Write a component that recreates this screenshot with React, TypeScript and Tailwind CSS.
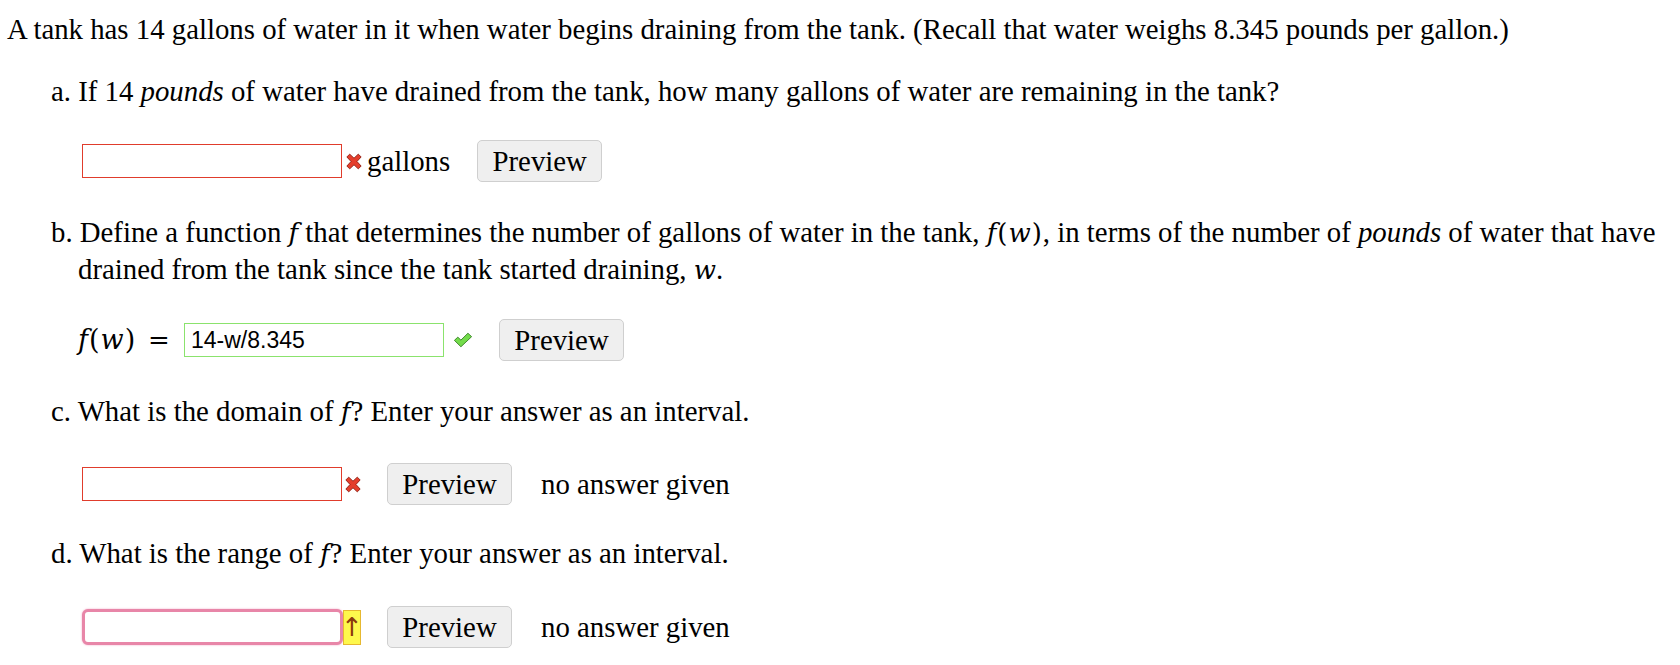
import React from "react";

const serif = { fontFamily: '"Liberation Serif", "Times New Roman", serif' };
const math = { fontFamily: '"DejaVu Serif", "Liberation Serif", serif' };

function XIcon() {
  return (
    <svg width="16" height="17" viewBox="0 0 14 15" className="block">
      <path d="M3.2 1 L7 4.6 L10.8 1 L13.3 3.5 L9.6 7.5 L13.3 11.5 L10.8 14 L7 10.4 L3.2 14 L0.7 11.5 L4.4 7.5 L0.7 3.5 Z" fill="#e53e2c" stroke="#8f1a0e" strokeWidth="0.8" strokeLinejoin="round" />
    </svg>
  );
}

function CheckIcon() {
  return (
    <svg width="20" height="16" viewBox="0 0 16 13" className="block">
      <path d="M1 6.8 L3.8 4.2 L6.3 6.6 L12 1 L15 3.8 L6.3 12 Z" fill="#74dc4c" stroke="#2e7a1c" strokeWidth="0.7" strokeLinejoin="round" />
    </svg>
  );
}

function PreviewBtn() {
  return (
    <button className="h-[42px] w-[125px] rounded-[5px] border border-[#cfcfcf] bg-[#efefef] text-[28.8px] text-black leading-none" style={serif}>
      Preview
    </button>
  );
}

function F() {
  return <i style={math} className="text-[26px]">f</i>;
}

export default function App() {
  return (
    <div className="bg-white text-black w-[1680px] h-[665px] overflow-hidden text-[28.8px] leading-[36px] whitespace-nowrap" style={serif}>
      <div className="pl-[7px] pt-[11px]">
        A tank has 14 gallons of water in it when water begins draining from the tank. (Recall that water weighs 8.345 pounds per gallon.)
      </div>

      <div className="pl-[51px] mt-[26px]">
        a. If 14 <i>pounds</i> of water have drained from the tank, how many gallons of water are remaining in the tank?
      </div>

      <div className="pl-[82px] mt-[31px] flex items-center h-[42px]">
        <div className="w-[260px] h-[34px] border border-[#e03c2c] bg-white"></div>
        <span className="ml-[4px] mr-[5px]"><XIcon /></span>
        <span>gallons</span>
        <span className="ml-[27px]"><PreviewBtn /></span>
      </div>

      <div className="pl-[51px] mt-[32px]">
        <div>
          b. Define a function <F /> that determines the number of gallons of water in the tank, <span style={math} className="text-[26px] tracking-[1px]"><i>f</i>(<i>w</i>)</span>, in terms of the number of <i>pounds</i> of water that have
        </div>
        <div className="pl-[27px]">
          drained from the tank since the tank started draining, <i style={math} className="text-[26px]">w</i>.
        </div>
      </div>

      <div className="pl-[78px] mt-[31px] flex items-center h-[42px]">
        <span style={math} className="text-[27px] w-[70px] tracking-[1px]"><i>f</i>(<i>w</i>)</span>
        <span style={math} className="text-[26px] w-[36px]">=</span>
        <div className="w-[260px] h-[34px] border border-[#8be36d] bg-white flex items-center pl-[6px] text-[23px]" style={{ fontFamily: '"Liberation Sans", Arial, sans-serif' }}>
          14-w/8.345
        </div>
        <span className="ml-[9px] mr-[26px]"><CheckIcon /></span>
        <PreviewBtn />
      </div>

      <div className="pl-[51px] mt-[32px]">
        c. What is the domain of <F />? Enter your answer as an interval.
      </div>

      <div className="pl-[82px] mt-[33px] flex items-center h-[42px]">
        <div className="w-[260px] h-[34px] border border-[#e03c2c] bg-white"></div>
        <span className="ml-[3px] mr-[26px]"><XIcon /></span>
        <PreviewBtn />
        <span className="ml-[29px]">no answer given</span>
      </div>

      <div className="pl-[51px] mt-[30px]">
        d. What is the range of <F />? Enter your answer as an interval.
      </div>

      <div className="pl-[82px] mt-[34px] flex items-center h-[42px]">
        <div className="w-[261px] h-[36px] border-[3px] border-[#e886a8] rounded-[6px] bg-white shadow-[0_0_2px_#f0a0c0]"></div>
        <span className="w-[18px] h-[35px] bg-[#fef84c] border border-[#e6b830] flex items-center justify-center text-[#8b3a0c] text-[26px] leading-none" style={{ fontFamily: '"DejaVu Sans", sans-serif' }}>↑</span>
        <span className="ml-[26px]"><PreviewBtn /></span>
        <span className="ml-[29px]">no answer given</span>
      </div>
    </div>
  );
}
